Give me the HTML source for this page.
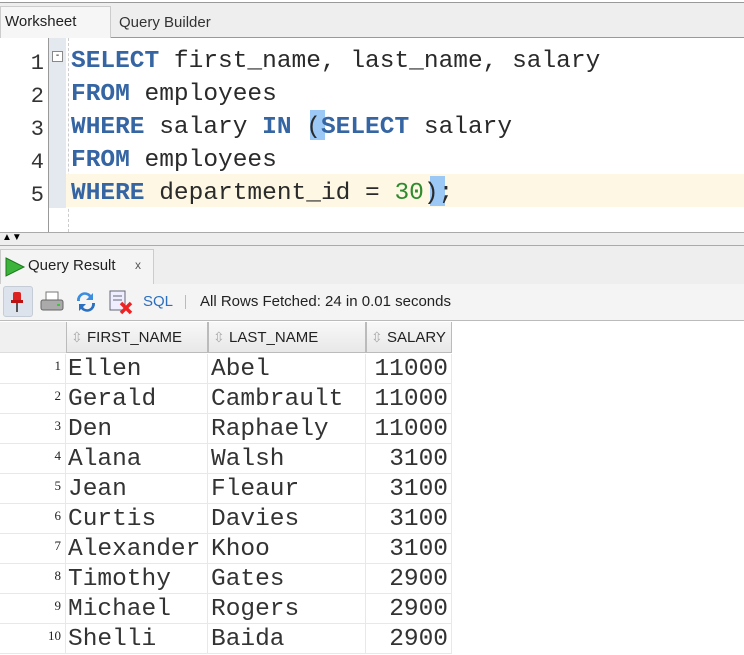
<!DOCTYPE html>
<html><head><style>
*{margin:0;padding:0;box-sizing:border-box}
body{width:744px;height:654px;overflow:hidden;background:#fff;position:relative;font-family:"Liberation Sans",sans-serif}
.a{position:absolute}
.code{font-family:"Liberation Mono",monospace;font-size:24.5px;white-space:pre;color:#2a2a2a}
.kw{color:#3565a3;font-weight:bold}
.num{color:#2e8b2e}
.ln{font-family:"Liberation Mono",monospace;font-size:22px;color:#333;text-align:right;width:44px}
.row{position:absolute;left:0;width:452px;height:30px;border-bottom:1px solid #e8e8e8}
.cell{position:absolute;top:0;height:30px;font-family:"Liberation Mono",monospace;font-size:24.5px;line-height:31px;color:#333;white-space:pre;border-right:1px solid #e8e8e8}
.rn{position:absolute;left:0;width:66px;height:30px;text-align:right;padding-right:4px;font-family:"Liberation Serif",serif;font-size:13px;line-height:24px;color:#222;border-right:1px solid #e8e8e8}
.hd{position:absolute;top:322px;height:31px;background:linear-gradient(#f8f8f8,#e8e8e8);border:1px solid #bbb;border-top:none;font-size:15px;line-height:31px;color:#222;padding-left:20px}
.hd:before{content:"⇳";position:absolute;left:4px;top:0;color:#aaa;font-size:14px}
</style></head><body>
<div class="a" style="left:0;top:2px;width:744px;height:36px;background:#eeeeee;border-top:1px solid #999;border-bottom:1px solid #999"></div>
<div class="a" style="left:0;top:6px;width:111px;height:32px;background:#f6f6f6;border:1px solid #ccc;border-bottom:none;font-size:15px;line-height:30px;padding-left:4px;color:#222">Worksheet</div>
<div class="a" style="left:119px;top:8px;font-size:15px;line-height:30px;color:#333">Query Builder</div>
<div class="a" style="left:48px;top:38px;width:18px;height:170px;background:#e4e9f0"></div>
<div class="a" style="left:48px;top:38px;width:1px;height:194px;background:#999"></div>
<div class="a" style="left:68px;top:38px;width:0;height:194px;border-left:1px dashed #ccc"></div>
<div class="a" style="left:66px;top:174px;width:678px;height:33px;background:#fdf7e3"></div>
<div class="a" style="left:52px;top:51px;width:11px;height:11px;border:1px solid #888;background:#fff;font-size:10px;line-height:8px;text-align:center">-</div>
<div class="a" style="left:310px;top:110px;width:15px;height:30px;background:#9cc8f5"></div>
<div class="a" style="left:430px;top:176px;width:15px;height:30px;background:#9cc8f5"></div>
<div class="a ln" style="left:0;top:47px;line-height:33px">1<br>2<br>3<br>4<br>5</div>
<div class="a code" style="left:71px;top:45px;line-height:33px"><span class="kw">SELECT</span> first_name, last_name, salary
<span class="kw">FROM</span> employees
<span class="kw">WHERE</span> salary <span class="kw">IN</span> (<span class="kw">SELECT</span> salary
<span class="kw">FROM</span> employees
<span class="kw">WHERE</span> department_id = <span class="num">30</span>);</div>
<div class="a" style="left:0;top:232px;width:744px;height:14px;background:#eee;border-top:1px solid #aaa;border-bottom:1px solid #aaa"></div>
<div class="a" style="left:2px;top:232px;font-size:10px;line-height:12px;color:#000">▲▼</div>
<div class="a" style="left:0;top:246px;width:744px;height:38px;background:#eeeeee"></div>
<div class="a" style="left:0;top:249px;width:154px;height:35px;background:#f4f4f4;border:1px solid #ccc;border-bottom:none"></div>
<svg class="a" style="left:4px;top:256px" width="22" height="22"><polygon points="2,2 20,11 2,20" fill="#3cb43c" stroke="#1a7a1a"/></svg>
<div class="a" style="left:28px;top:252px;font-size:15px;line-height:28px;color:#222">Query Result</div>
<div class="a" style="left:135px;top:252px;font-size:12px;line-height:26px;color:#555">x</div>
<div class="a" style="left:0;top:284px;width:744px;height:37px;background:#f4f4f4;border-bottom:1px solid #bbb"></div>
<div class="a" style="left:3px;top:286px;width:30px;height:31px;background:#dde3ec;border:1px solid #c5ccd6;border-radius:3px"></div>
<svg class="a" style="left:8px;top:290px" width="20" height="24"><rect x="5" y="2" width="8" height="10" rx="2" fill="#d22"/><rect x="3" y="10" width="12" height="3" fill="#b11"/><line x1="9" y1="13" x2="9" y2="22" stroke="#555" stroke-width="2"/></svg>
<svg class="a" style="left:39px;top:290px" width="26" height="24"><rect x="7" y="2" width="12" height="9" fill="#fff" stroke="#777"/><rect x="2" y="10" width="22" height="10" rx="2" fill="#aaa" stroke="#666"/><rect x="18" y="14" width="3" height="2" fill="#3c3"/></svg>
<svg class="a" style="left:73px;top:289px" width="26" height="26"><path d="M4 12a8 8 0 0 1 14-6l2-2v7h-7l3-3a5 5 0 0 0-9 4z" fill="#3b8de0"/><path d="M22 14a8 8 0 0 1-14 6l-2 2v-7h7l-3 3a5 5 0 0 0 9-4z" fill="#2a6fc0"/></svg>
<svg class="a" style="left:108px;top:289px" width="26" height="26"><rect x="2" y="2" width="15" height="19" fill="#eef" stroke="#667"/><line x1="5" y1="7" x2="14" y2="7" stroke="#667"/><line x1="5" y1="11" x2="14" y2="11" stroke="#667"/><path d="M13 14l10 10M23 14l-10 10" stroke="#e22" stroke-width="3.5"/></svg>
<div class="a" style="left:143px;top:288px;font-size:15px;line-height:28px;color:#2a6fc0">SQL</div>
<div class="a" style="left:185px;top:295px;width:1px;height:14px;background:#bbb"></div>
<div class="a" style="left:200px;top:288px;font-size:15px;line-height:28px;color:#222">All Rows Fetched: 24 in 0.01 seconds</div>
<div class="a" style="left:0;top:322px;width:66px;height:31px;background:#f0f0f0;border-bottom:1px solid #ddd"></div>
<div class="hd" style="left:66px;width:142px">FIRST_NAME</div>
<div class="hd" style="left:208px;width:158px">LAST_NAME</div>
<div class="hd" style="left:366px;width:86px">SALARY</div>
<div id="rows"></div>
<script>
var d=[["Ellen","Abel","11000"],["Gerald","Cambrault","11000"],["Den","Raphaely","11000"],["Alana","Walsh","3100"],["Jean","Fleaur","3100"],["Curtis","Davies","3100"],["Alexander","Khoo","3100"],["Timothy","Gates","2900"],["Michael","Rogers","2900"],["Shelli","Baida","2900"]];
var h="";d.forEach(function(r,i){h+='<div class="row" style="top:'+(354+i*30)+'px"><div class="rn">'+(i+1)+'</div><div class="cell" style="left:66px;width:142px;padding-left:2px">'+r[0]+'</div><div class="cell" style="left:208px;width:158px;padding-left:3px">'+r[1]+'</div><div class="cell" style="left:366px;width:86px;text-align:right;padding-right:3px">'+r[2]+'</div></div>'});
document.getElementById("rows").innerHTML=h;
</script>
</body></html>
